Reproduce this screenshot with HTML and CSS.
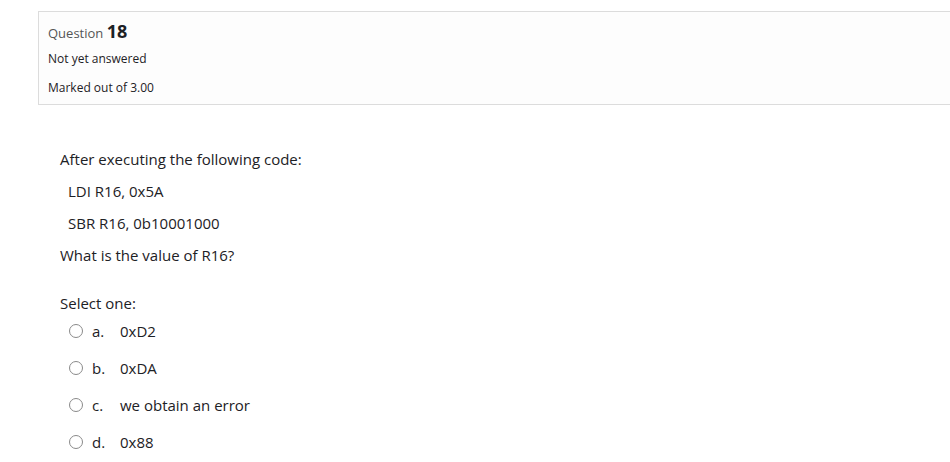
FILE: index.html
```html
<!DOCTYPE html>
<html>
<head>
<meta charset="utf-8">
<link rel="stylesheet" href="styles.css">
</head>
<body>
<div class="que">
  <div class="info">
    <h3 class="qno">Question <span class="num">18</span></h3>
    <div class="state">Not yet answered</div>
    <div class="grade">Marked out of 3.00</div>
  </div>
  <div class="content">
    <p class="qtext">After executing the following code:</p>
    <p class="code">LDI R16, 0x5A</p>
    <p class="code">SBR R16, 0b10001000</p>
    <p class="qtext">What is the value of R16?</p>
    <p class="prompt">Select one:</p>
    <div class="answers">
      <label class="opt"><span class="radio"></span><span class="letter">a.</span><span class="ans">0xD2</span></label>
      <label class="opt"><span class="radio"></span><span class="letter">b.</span><span class="ans">0xDA</span></label>
      <label class="opt"><span class="radio"></span><span class="letter">c.</span><span class="ans">we obtain an error</span></label>
      <label class="opt"><span class="radio"></span><span class="letter">d.</span><span class="ans">0x88</span></label>
    </div>
  </div>
</div>
</body>
</html>
```
FILE: styles.css
```css
html, body {
  margin: 0;
  padding: 0;
  background: #ffffff;
}
body {
  font-family: "Open Sans", "Noto Sans", sans-serif;
  color: #1d2125;
  width: 950px;
  height: 462px;
  overflow: hidden;
}
.que {
  padding: 11px 0 0 38px;
}
.info {
  border: 1px solid #dcdcdc;
  border-right: none;
  background: #fdfdfd;
  padding: 8px 0 8px 9px;
  height: 76px;
}
.qno {
  margin: 0;
  font-size: 13px;
  font-weight: 400;
  color: #555;
  line-height: 22px;
}
.qno .num {
  font-size: 18px;
  font-weight: 700;
  color: #1d2125;
}
.state, .grade {
  font-size: 12px;
  line-height: 16px;
  color: #1d2125;
}
.state {
  margin-top: 7px;
}
.grade {
  margin-top: 13px;
}
.content {
  padding: 38px 0 0 22px;
}
.content p {
  margin: 0;
  font-size: 15px;
  line-height: 32px;
}
.content p.code {
  padding-left: 8px;
}
.content p.prompt {
  margin-top: 21px;
  line-height: 22px;
}
.answers {
  display: flex;
  flex-direction: column;
  margin-top: -2px;
}
.opt {
  display: flex;
  align-items: center;
  height: 37px;
  font-size: 15px;
  padding-left: 9px;
}
.radio {
  width: 14px;
  height: 14px;
  border: 1px solid #8a8a8a;
  border-radius: 50%;
  box-sizing: border-box;
  margin-right: 9px;
}
.letter {
  width: 28px;
}
```
